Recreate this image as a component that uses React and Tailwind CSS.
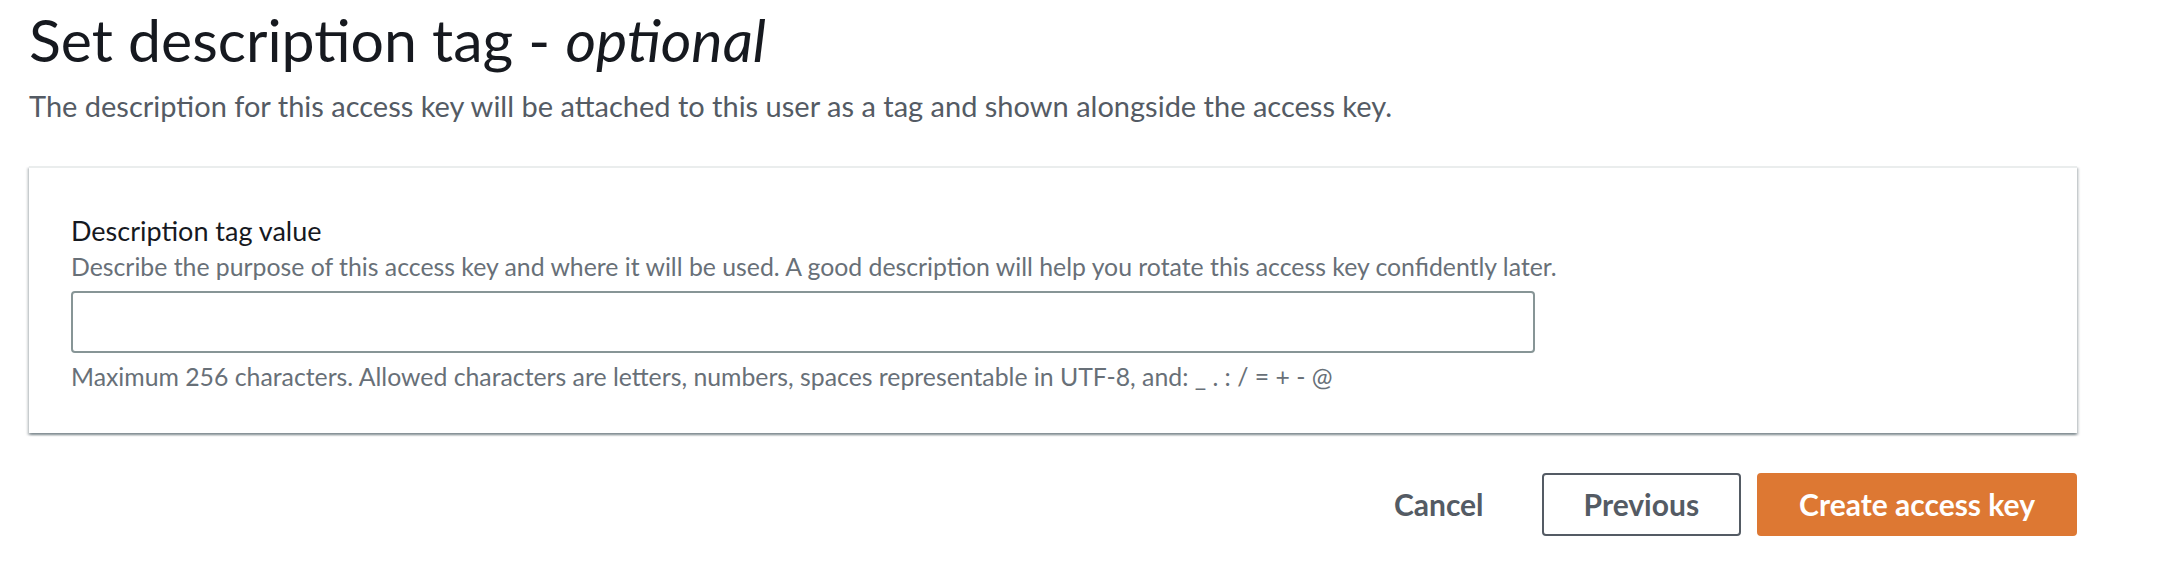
export default function App() {
  return (
    <div className="min-h-[580px] bg-white pl-[29px] pr-[107px] font-['Lato',sans-serif] text-[#16191f]">
      <h1 className="pt-[4px] text-[59px] leading-[72px] font-normal">
        Set description tag - <i>optional</i>
      </h1>
      <p className="mt-[10px] text-[29px] leading-[40px] text-[#545b64]">
        The description for this access key will be attached to this user as a tag and shown alongside the access key.
      </p>

      <div className="mt-[40px] border-t-2 border-[#eaeded] bg-white px-[42px] pt-[43px] pb-[40px] shadow-[0_2px_2px_0_rgba(0,28,36,0.3),2px_2px_2px_0_rgba(0,28,36,0.15),-2px_2px_2px_0_rgba(0,28,36,0.15)]">
        <label className="block text-[27px] leading-[40px] text-[#16191f]">Description tag value</label>
        <p className="text-[24.8px] leading-[32px] text-[#687078]">
          Describe the purpose of this access key and where it will be used. A good description will help you rotate this access key confidently later.
        </p>
        <input
          type="text"
          className="mt-[8px] block h-[62px] w-[1464px] rounded-[4px] border-2 border-[#879596] bg-white px-[20px] text-[28px] outline-none"
        />
        <p className="mt-[8px] text-[24.8px] leading-[32px] text-[#687078]">
          Maximum 256 characters. Allowed characters are letters, numbers, spaces representable in UTF-8, and: _ . : / = + - @
        </p>
      </div>

      <div className="mt-[40px] flex items-center justify-end gap-[16px]">
        <button className="h-[63px] rounded-[4px] border-2 border-transparent px-[40px] text-[30px] font-bold text-[#545b64]">
          Cancel
        </button>
        <button className="h-[63px] rounded-[4px] border-2 border-[#545b64] bg-white px-[40px] text-[30px] font-bold text-[#545b64]">
          Previous
        </button>
        <button className="h-[63px] rounded-[4px] border-2 border-[#dd7833] bg-[#dd7833] px-[40px] text-[30px] font-bold text-white">
          Create access key
        </button>
      </div>
    </div>
  );
}
